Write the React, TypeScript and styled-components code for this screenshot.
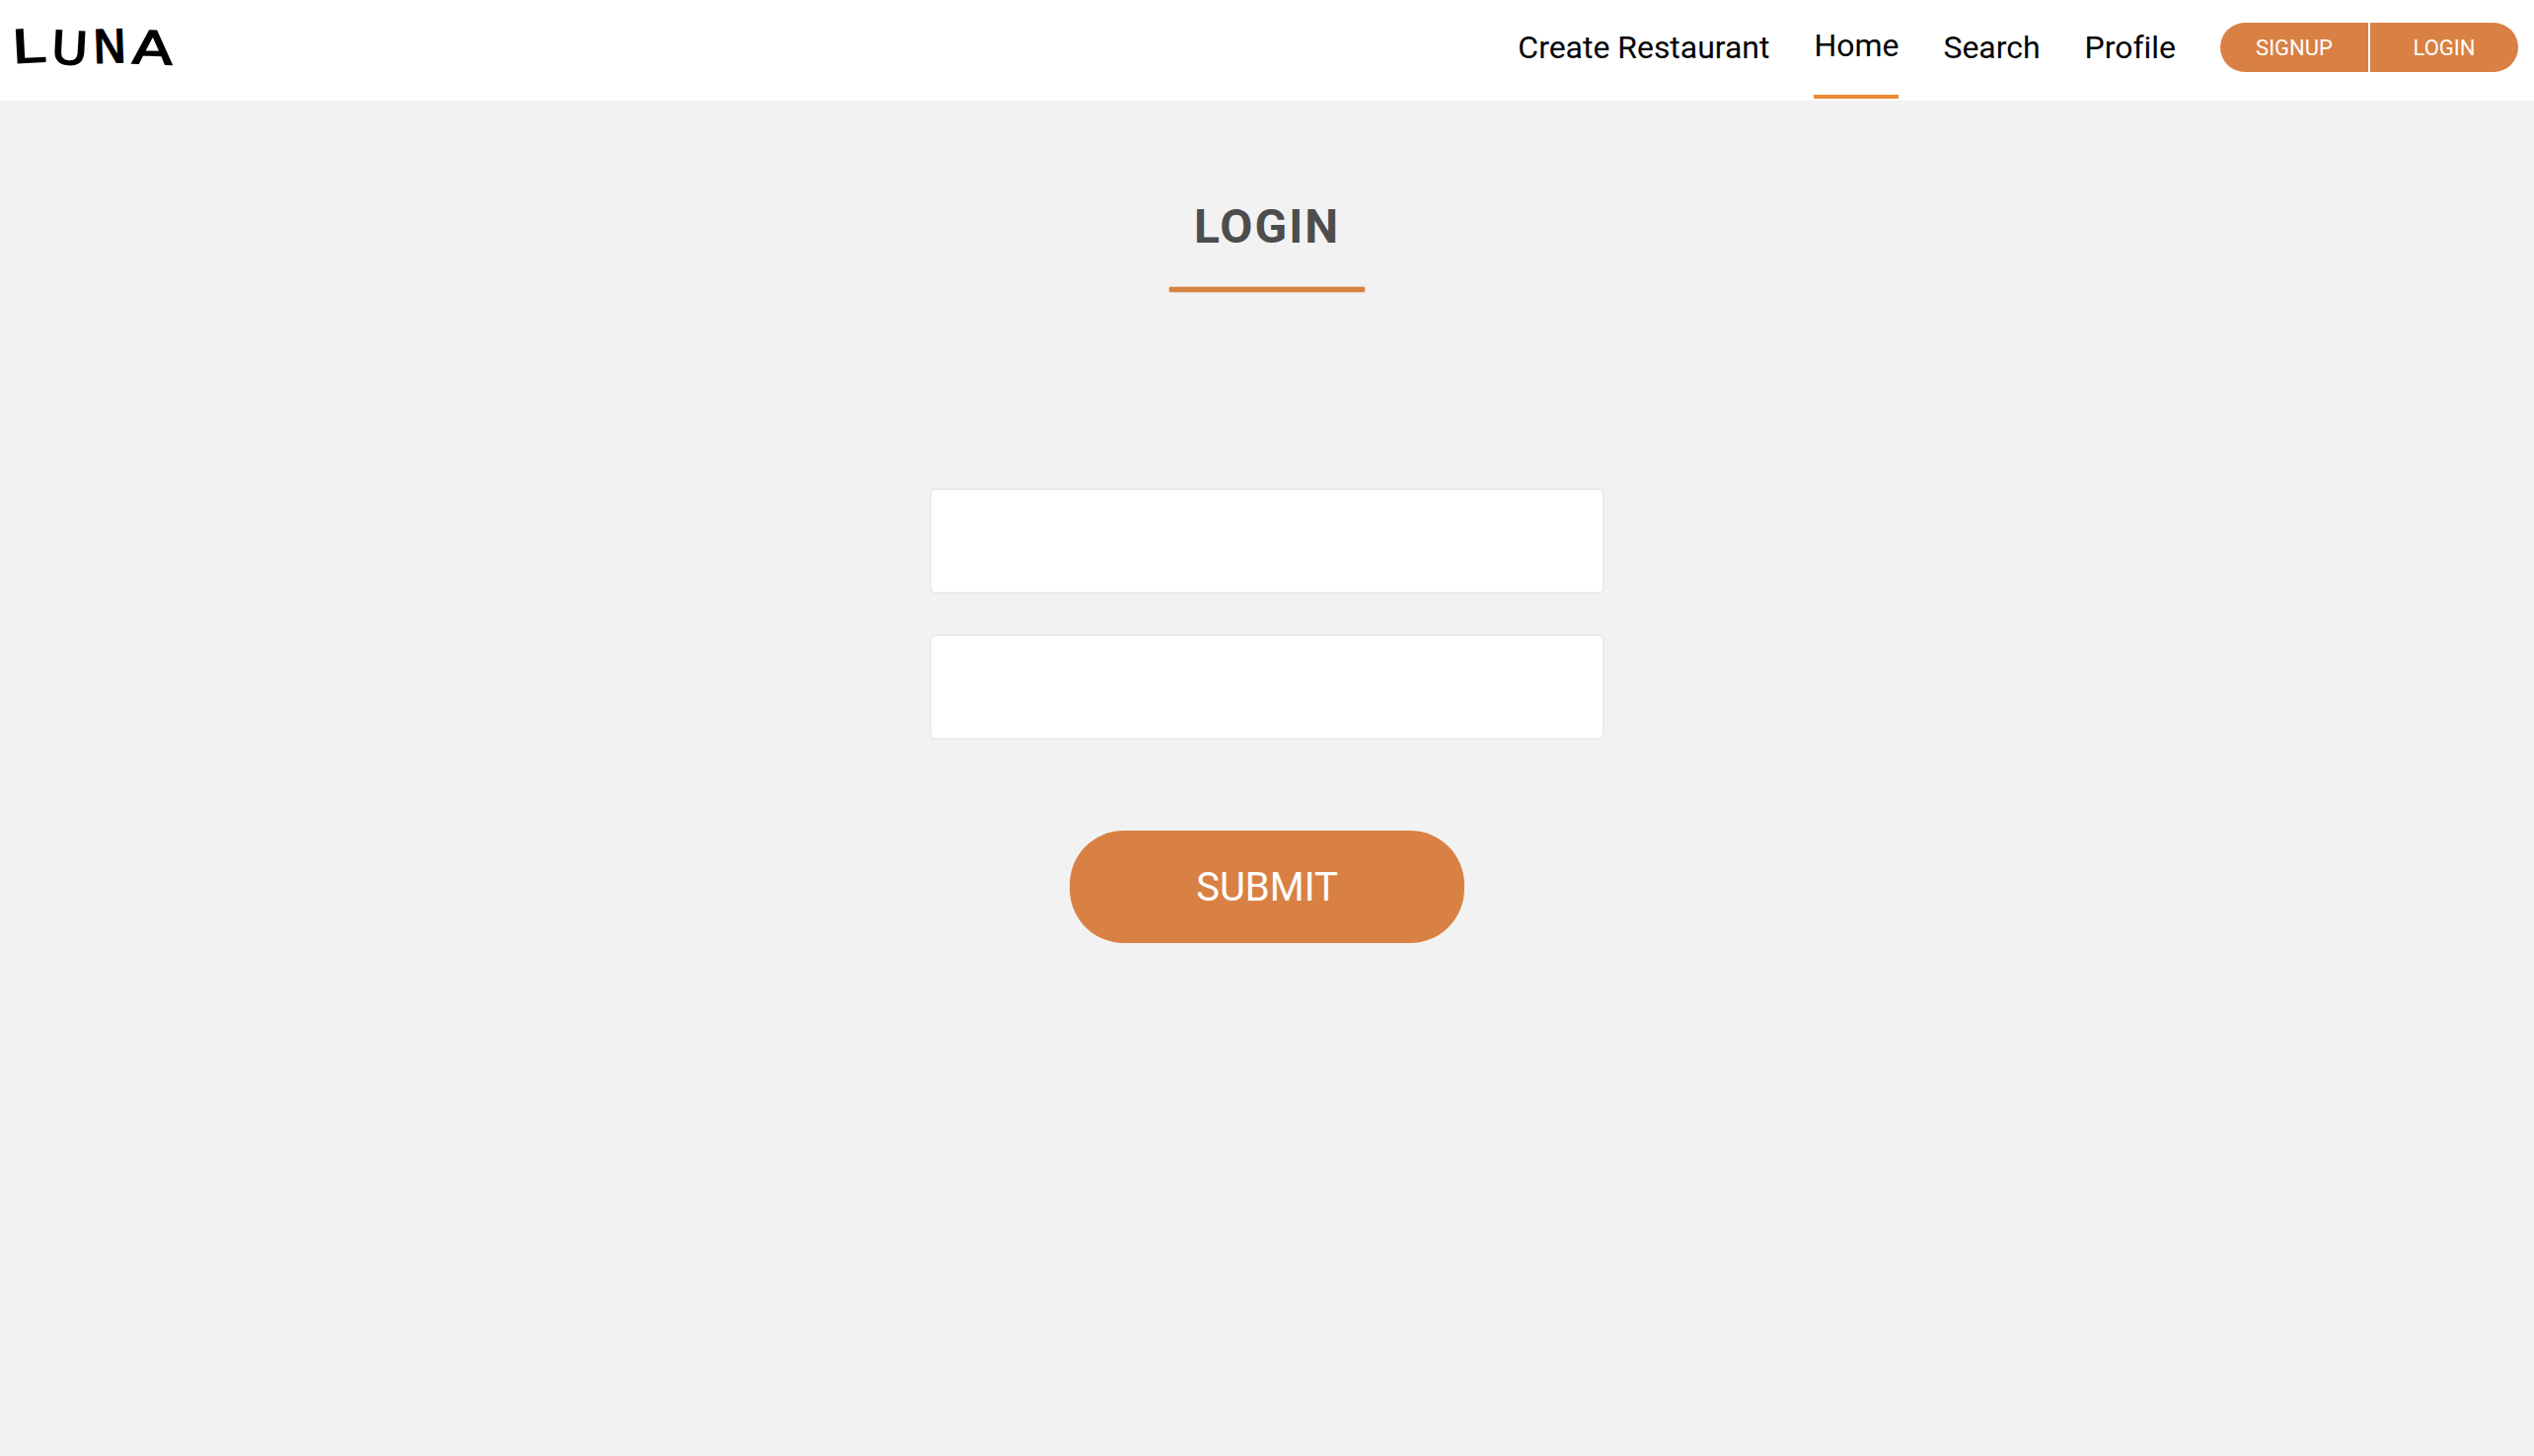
import React from "react";
import styled, { createGlobalStyle } from "styled-components";

const GlobalStyle = createGlobalStyle`
  html, body {
    margin: 0;
    padding: 0;
    background: #f2f2f2;
    font-family: Roboto, "Liberation Sans", sans-serif;
  }
  * {
    box-sizing: border-box;
  }
`;

const Header = styled.header`
  height: 102px;
  background: #ffffff;
  display: flex;
  align-items: stretch;
  justify-content: space-between;
  padding: 0 16px 0 12px;
`;

const Logo = styled.div`
  display: flex;
  align-items: center;
  height: 96px;
  font-family: "DejaVu Sans", sans-serif;
  font-size: 46px;
  font-weight: 400;
  color: #000;
  -webkit-text-stroke: 1.5px #000;
`;

const LogoLetter = styled.span<{ $tilt: number; $width: number; $stretch: number }>`
  display: inline-block;
  width: ${(p) => p.$width}px;
  transform-origin: left center;
  transform: rotate(${(p) => p.$tilt}deg) scaleX(${(p) => p.$stretch});
`;

const Nav = styled.nav`
  display: flex;
  align-items: stretch;
  gap: 45px;
`;

const NavLink = styled.a<{ $active?: boolean }>`
  display: flex;
  align-items: center;
  height: 100px;
  padding-bottom: ${(p) => (p.$active ? "4px" : "0")};
  font-size: 32px;
  letter-spacing: -0.03px;
  color: #000;
  border-bottom: 4px solid ${(p) => (p.$active ? "#ed8b33" : "transparent")};
`;

const AuthButtons = styled.div`
  display: flex;
  align-items: center;
  gap: 2px;
`;

const AuthButton = styled.button<{ $side: "left" | "right" }>`
  width: 150px;
  height: 50px;
  margin-bottom: 6px;
  border: none;
  padding: 0;
  background: #d98144;
  color: #fff;
  font-family: Roboto, sans-serif;
  font-size: 22px;
  text-transform: uppercase;
  border-radius: ${(p) => (p.$side === "left" ? "25px 0 0 25px" : "0 25px 25px 0")};
`;

const Main = styled.main`
  min-height: 1374px;
  display: flex;
  flex-direction: column;
  align-items: center;
  padding-top: 100px;
`;

const Title = styled.h1`
  margin: 0;
  font-size: 48px;
  line-height: 56px;
  font-weight: 700;
  letter-spacing: 2px;
  color: #4d4d4d;
`;

const TitleRule = styled.div`
  width: 198px;
  height: 5px;
  margin-top: 33px;
  background: #d98144;
  box-shadow: 0 0 2px #d98144;
  border-radius: 1px;
`;

const Form = styled.form`
  display: flex;
  flex-direction: column;
  align-items: center;
  gap: 41px;
  margin-top: 199px;
`;

const Input = styled.input`
  display: block;
  width: 684px;
  height: 107px;
  background: #fff;
  border: 2px solid #ebebeb;
  border-radius: 6px;
  outline: none;
`;

const Submit = styled.button`
  width: 400px;
  height: 114px;
  margin-top: 51px;
  border: none;
  border-radius: 55px;
  background: #d98144;
  color: #fff;
  font-family: Roboto, sans-serif;
  font-size: 40px;
  text-transform: uppercase;
`;

export default function App() {
  return (
    <>
      <GlobalStyle />
      <Header>
        <Logo>
          <LogoLetter $tilt={-3} $width={40} $stretch={1.3}>L</LogoLetter>
          <LogoLetter $tilt={3} $width={42} $stretch={1.1}>U</LogoLetter>
          <LogoLetter $tilt={-2} $width={40} $stretch={1}>N</LogoLetter>
          <LogoLetter $tilt={2} $width={40} $stretch={1.3}>A</LogoLetter>
        </Logo>
        <Nav>
          <NavLink>Create Restaurant</NavLink>
          <NavLink $active>Home</NavLink>
          <NavLink>Search</NavLink>
          <NavLink>Profile</NavLink>
          <AuthButtons>
            <AuthButton $side="left">Signup</AuthButton>
            <AuthButton $side="right">Login</AuthButton>
          </AuthButtons>
        </Nav>
      </Header>
      <Main>
        <Title>LOGIN</Title>
        <TitleRule />
        <Form>
          <Input type="text" />
          <Input type="password" />
          <Submit type="submit">Submit</Submit>
        </Form>
      </Main>
    </>
  );
}
